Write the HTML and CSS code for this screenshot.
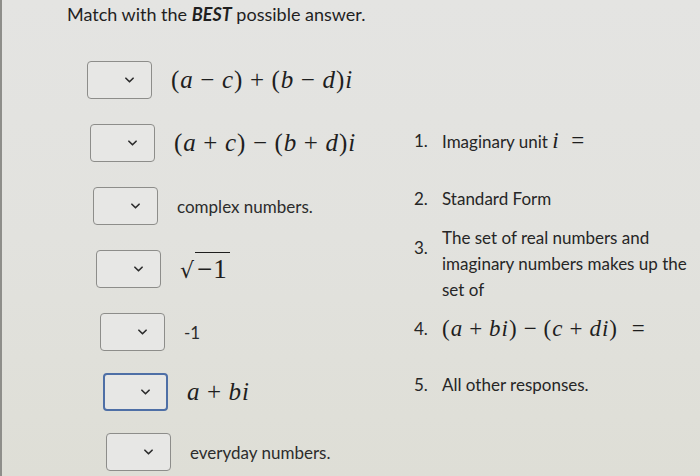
FILE: index.html
```html
<!DOCTYPE html>
<html>
<head>
<meta charset="utf-8">
<link rel="stylesheet" href="styles.css">
</head>
<body>
<div class="page">
  <h1 class="title">Match with the <b><i>BEST</i></b> possible answer.</h1>
  <div class="main">
    <div class="left">
      <div class="row r1">
        <div class="sel"><svg class="chev" viewBox="0 0 10 6"><polyline points="1,1 5,5 9,1"/></svg></div>
        <span class="math">(<i>a</i><span class="op">−</span><i>c</i>)<span class="op">+</span>(<i>b</i><span class="op">−</span><i>d</i>)<i>i</i></span>
      </div>
      <div class="row r2">
        <div class="sel"><svg class="chev" viewBox="0 0 10 6"><polyline points="1,1 5,5 9,1"/></svg></div>
        <span class="math">(<i>a</i><span class="op">+</span><i>c</i>)<span class="op">−</span>(<i>b</i><span class="op">+</span><i>d</i>)<i>i</i></span>
      </div>
      <div class="row r3">
        <div class="sel"><svg class="chev" viewBox="0 0 10 6"><polyline points="1,1 5,5 9,1"/></svg></div>
        <span class="txt">complex numbers.</span>
      </div>
      <div class="row r4">
        <div class="sel"><svg class="chev" viewBox="0 0 10 6"><polyline points="1,1 5,5 9,1"/></svg></div>
        <span class="math"><span class="rad">√</span><span class="radicand">−1</span></span>
      </div>
      <div class="row r5">
        <div class="sel"><svg class="chev" viewBox="0 0 10 6"><polyline points="1,1 5,5 9,1"/></svg></div>
        <span class="txt">-1</span>
      </div>
      <div class="row r6">
        <div class="sel focus"><svg class="chev" viewBox="0 0 10 6"><polyline points="1,1 5,5 9,1"/></svg></div>
        <span class="math"><i>a</i><span class="op">+</span><i>bi</i></span>
      </div>
      <div class="row r7">
        <div class="sel"><svg class="chev" viewBox="0 0 10 6"><polyline points="1,1 5,5 9,1"/></svg></div>
        <span class="txt">everyday numbers.</span>
      </div>
    </div>
    <ol class="right">
      <li class="item i1"><span class="num">1.</span><span class="desc">Imaginary unit <span class="math sm"><i>i</i><span class="op">=</span></span></span></li>
      <li class="item i2"><span class="num">2.</span><span class="desc">Standard Form</span></li>
      <li class="item i3"><span class="num">3.</span><span class="desc wrap">The set of real numbers and imaginary numbers makes up the set of</span></li>
      <li class="item i4"><span class="num">4.</span><span class="desc"><span class="math sm">(<i>a</i><span class="op">+</span><i>bi</i>)<span class="op">−</span>(<i>c</i><span class="op">+</span><i>di</i>)<span class="op eq">=</span></span></span></li>
      <li class="item i5"><span class="num">5.</span><span class="desc">All other responses.</span></li>
    </ol>
  </div>
</div>
</body>
</html>
```
FILE: styles.css
```css
html, body {
  margin: 0;
  padding: 0;
}
body {
  width: 700px;
  height: 476px;
  overflow: hidden;
  background: linear-gradient(180deg, #e4e4e2 0%, #e2e2de 50%, #deded6 100%);
  font-family: Lato, "Open Sans", sans-serif;
  color: #262626;
}
.page {
  height: 476px;
  box-sizing: border-box;
  border-left: 2px solid #8e8e8a;
}
.title {
  margin: 0;
  padding: 3px 0 0 65px;
  font-size: 18px;
  font-weight: 400;
  line-height: 22px;
  color: #1f1f1f;
}
.title b {
  font-weight: 700;
}
.main {
  display: flex;
  margin-top: 36px;
}
.left {
  width: 412px;
  flex: none;
  display: flex;
  flex-direction: column;
  gap: 25px;
  padding-left: 85px;
  box-sizing: border-box;
}
.row {
  display: flex;
  align-items: center;
  gap: 19px;
  height: 38px;
}
.r2 { margin-left: 3px; }
.r3 { margin-left: 6px; }
.r4 { margin-left: 9px; }
.r5 { margin-left: 13px; }
.r6 { margin-left: 16px; margin-top: -3px; }
.r7 { margin-left: 19px; margin-top: -3px; }
.sel {
  width: 65px;
  height: 38px;
  box-sizing: border-box;
  border: 1px solid #8d8d8a;
  border-radius: 4px;
  background: #e7e7e5;
  display: flex;
  align-items: center;
  justify-content: flex-end;
  padding-right: 17px;
  flex: none;
}
.sel.focus {
  border: 2px solid #4e6fa6;
  padding-right: 16px;
}
.chev {
  width: 9px;
  height: 6px;
  fill: none;
  stroke: #2b2b2b;
  stroke-width: 1.8;
  stroke-linecap: round;
  stroke-linejoin: round;
}
.txt {
  font-size: 17px;
  color: #2c2c2c;
}
.math {
  font-family: "Liberation Serif", "Times New Roman", serif;
  font-size: 25px;
  letter-spacing: 1px;
  color: #1e1e1e;
  white-space: nowrap;
}
.math i {
  font-style: italic;
}
.op {
  margin: 0 0.26em;
}
.rad {
  font-family: "DejaVu Serif", serif;
  font-size: 22px;
}
.radicand {
  border-top: 1.5px solid #1e1e1e;
  padding: 1px 2px 0 2px;
  font-size: 27px;
}
.right {
  list-style: none;
  margin: 0;
  padding: 67px 0 0 0;
  display: flex;
  flex-direction: column;
  font-size: 17px;
  color: #262626;
}
.item {
  display: flex;
  line-height: 26px;
}
.num {
  width: 28px;
  flex: none;
}
.i2 { margin-top: 31px; }
.i3 { margin-top: 13px; }
.i3 .num { margin-top: 10px; }
.i4 { margin-top: 9px; line-height: 34px; }
.i5 { margin-top: 25px; }
.wrap {
  width: 252px;
}
.math.sm {
  font-size: 23px;
}
.eq {
  margin-left: 0.6em;
}
.i1 .math .op {
  margin-left: 0.5em;
}
```
